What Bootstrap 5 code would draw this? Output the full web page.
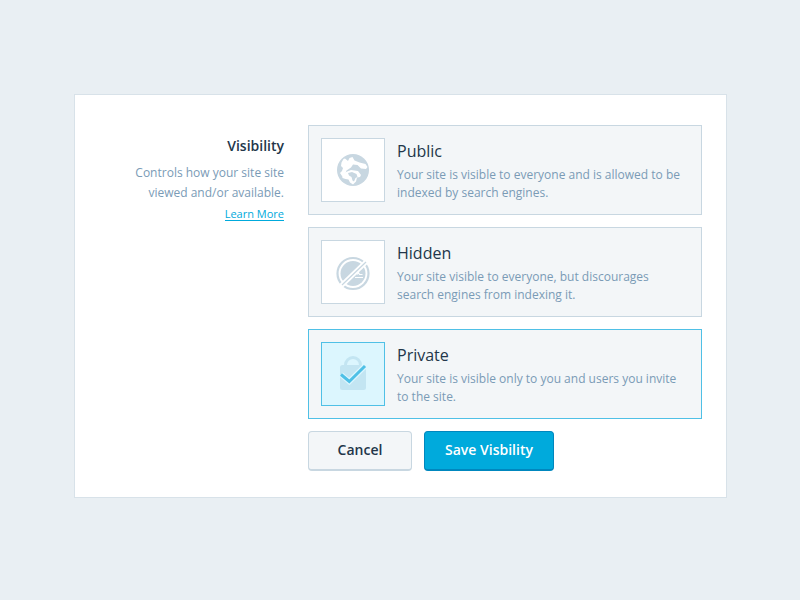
<!doctype html>
<html lang="en"><head><meta charset="utf-8">
<link href="https://cdn.jsdelivr.net/npm/bootstrap@5.3.0/dist/css/bootstrap.min.css" rel="stylesheet">
<style>
html,body{height:100%}
body{background:#e9eff3;font-family:"Open Sans",sans-serif;color:#22364a}
.stage{padding:94px 73px 0 74px}
.panel{background:#fff;border:1px solid #d8e2e9;height:404px;padding:30px 24px 0 0}
.side{width:209px;margin-right:24px;text-align:right;padding-top:11px}
.side-title{font-size:14px;font-weight:600;line-height:20px;margin:0 0 7px;color:#22364a}
.side-text{font-size:12px;line-height:20px;color:#7a9bb6;margin:0}
.side-link{display:inline-block;vertical-align:top;font-size:11px;line-height:13px;color:#00aadc;text-decoration:none;border-bottom:1px solid #00aadc;margin-top:4px}
.opts{width:394px}
.opt{height:90px;background:#f3f6f8;border:1px solid #c8d7e1;padding:12px;margin-bottom:12px;display:flex}
.opt-on{border-color:#4fc0e6}
.opt-icon{width:64px;height:64px;background:#fff;border:1px solid #c8d7e1;flex:none;margin-right:12px}
.opt-on .opt-icon{background:#dcf6fe;border-color:#4fc0e6}
.opt-icon svg{display:block;width:62px;height:62px}
.opt-name{font-size:16px;line-height:24px;color:#22364a;margin:1px 0 3px}
.opt-desc{font-size:12px;line-height:18px;color:#7a9bb6;margin:0}
.acts{margin-top:-12px;padding-top:12px}
.btn-c,.btn-s{font-family:inherit;font-size:14px;font-weight:600;height:40px;border-radius:4px;padding:0 0 2px;line-height:34px}
.btn-c{width:104px;background:#f3f6f8;border:1px solid #c8d7e1;border-bottom-width:2px;color:#22364a}
.btn-s{width:130px;background:#00aadc;border:1px solid #0087be;border-bottom-width:2px;color:#fff}
.btn-c:hover{background:#f3f6f8;border-color:#c8d7e1;color:#22364a}
.btn-s:hover{background:#00aadc;border-color:#0087be;color:#fff}
</style></head>
<body>
<div class="stage">
<div class="panel d-flex">
  <div class="side">
    <h2 class="side-title">Visibility</h2>
    <p class="side-text">Controls how your site site<br>viewed and/or available.</p>
    <a class="side-link" href="#">Learn More</a>
  </div>
  <div class="opts">
    <div class="opt">
      <div class="opt-icon"><svg viewBox="0 0 62 62"><circle cx="31" cy="31" r="16" fill="#c8d7e1"/><path d="M23 19.500l3 2.500 1.500-3 3-1 2 3.500 5 2 6 1.500 2 3-1.500 2-5-.5-3.500-3.500-4.500-.5-2 3-4.500 3-1 2.500-3.500 3-2-3 2-2 1-3-2-2 .5-3.500 2-3.500z" fill="#fff"/><path d="M20 36l4-3 5-2 7 1 3 4-1 2-3 .5-1 4-3 3-3-2-1.500-3-3-.5-3-1z" fill="#fff"/><path d="M26 34l4-1 4.500 2 1 3-2 1-1.500 3.500-1.500-1-1-3.500-2.500-1.500z" fill="#c8d7e1"/></svg></div>
      <div><h3 class="opt-name">Public</h3><p class="opt-desc">Your site is visible to everyone and is allowed to be<br>indexed by search engines.</p></div>
    </div>
    <div class="opt">
      <div class="opt-icon"><svg viewBox="0 0 62 62"><circle cx="31" cy="32.500" r="15.500" fill="none" stroke="#c8d7e1" stroke-width="2.200"/><circle cx="31" cy="32.500" r="12.500" fill="#c8d7e1"/><path d="M19 45L45 20" stroke="#fff" stroke-width="5"/><path d="M20 44L44 21" stroke="#c8d7e1" stroke-width="1.200"/><path d="M35 33.500l1.500-2 1 2h3M33 36.500h8" fill="none" stroke="#fff" stroke-width="1.100"/></svg></div>
      <div><h3 class="opt-name">Hidden</h3><p class="opt-desc">Your site visible to everyone, but discourages<br>search engines from indexing it.</p></div>
    </div>
    <div class="opt opt-on">
      <div class="opt-icon"><svg viewBox="0 0 62 62"><path d="M23.500 26v-4a7.500 7.500 0 0 1 15 0v4" fill="none" stroke="#c3e5f2" stroke-width="3"/><rect x="18" y="22" width="26" height="25" rx="2.500" fill="#c3e5f2"/><path d="M19 31.500l8.300 7L43 23" fill="none" stroke="#dcf6fe" stroke-width="5.500"/><path d="M19 31.500l8.300 7L43 23" fill="none" stroke="#4fc0e6" stroke-width="3"/></svg></div>
      <div><h3 class="opt-name">Private</h3><p class="opt-desc">Your site is visible only to you and users you invite<br>to the site.</p></div>
    </div>
    <div class="d-flex gap-2 acts">
      <button class="btn btn-c" type="button">Cancel</button>
      <button class="btn btn-s ms-1" type="button">Save Visbility</button>
    </div>
  </div>
</div>
</div>
<script src="https://cdn.jsdelivr.net/npm/bootstrap@5.3.0/dist/js/bootstrap.bundle.min.js"></script>
</body></html>
